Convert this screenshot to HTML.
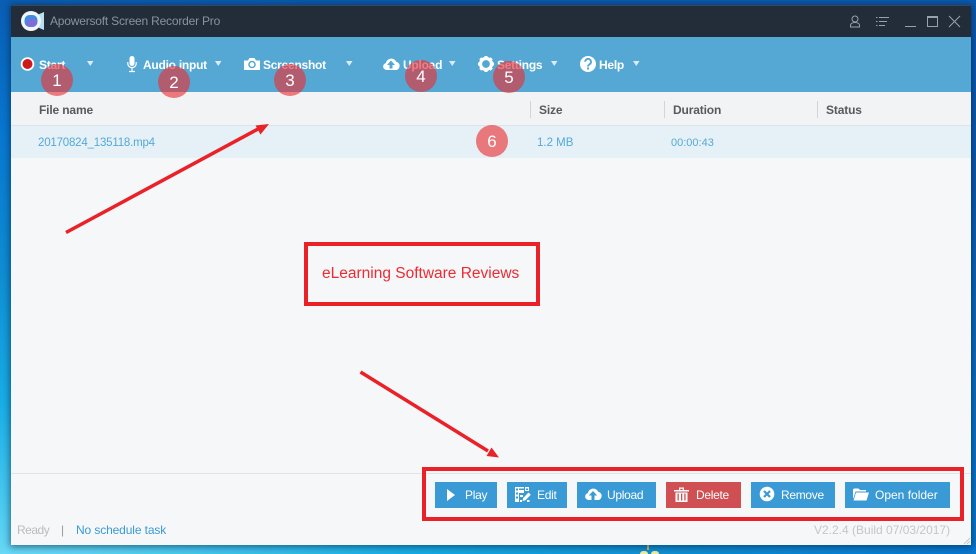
<!DOCTYPE html>
<html><head><meta charset="utf-8">
<style>
*{margin:0;padding:0;box-sizing:border-box}
html,body{width:976px;height:554px;overflow:hidden}
body{position:relative;font-family:"Liberation Sans",sans-serif;font-size:12px;background:radial-gradient(ellipse 1300px 620px at 0 600px,#84e6fa 0,#4fcdf2 14%,#18aee6 32%,#0e8ed4 53%,#0878d0 75%,#0a5ab0 100%)}
.a{position:absolute;white-space:nowrap}
#win{position:absolute;left:11px;top:5px;width:960px;height:540px;background:#f6f7f9;box-shadow:0 1px 7px 1px rgba(0,20,50,.55)}
.t{height:16px;line-height:16px}
.tb{color:#fff;font-weight:bold;font-size:12px;letter-spacing:-.25px}
.hd{color:#5a5a5e;font-weight:bold;font-size:12px;letter-spacing:-.15px}
.rw{color:#55a9d8;font-size:11px}
.btn{position:absolute;top:482px;height:26px;background:#3a9ad6}
.bt{position:absolute;top:487px;color:#fff;font-size:12px;line-height:16px;white-space:nowrap;letter-spacing:-.3px}
.sep{position:absolute;top:101px;width:1px;height:17px;background:#d2d4d6}
.c{position:absolute;width:32px;height:32px;border-radius:50%;background:rgba(235,45,50,.62);color:#fff;font-size:17px;line-height:34px;text-align:center}
.box{position:absolute;border:4px solid #ea2228}
svg{position:absolute;left:0;top:0}
</style></head><body>
<div class="a" style="left:640px;top:551px;width:8px;height:3px;border-radius:3px 3px 0 0;background:#f4efa0"></div>
<div class="a" style="left:651px;top:551px;width:8px;height:3px;border-radius:3px 3px 0 0;background:#f4efa0"></div>
<div class="a" style="left:647px;top:545px;width:2px;height:5px;background:#d8c070"></div>
<div id="win"></div>
<div class="a" style="left:11px;top:5px;width:960px;height:32px;background:#232d3a;border-top:1px solid #3c4550"></div>
<div class="a" style="left:11px;top:37px;width:960px;height:55px;background:#55a8d4"></div>
<div class="a" style="left:11px;top:92px;width:960px;height:33px;background:#f1f3f5"></div>
<div class="a" style="left:11px;top:125px;width:960px;height:1px;background:#d8e5ea"></div>
<div class="a" style="left:11px;top:126px;width:960px;height:32px;background:#e5f1f6"></div>
<div class="a" style="left:11px;top:473px;width:960px;height:1px;background:#e0e6e8"></div>

<div class="a t" style="left:50px;top:13px;color:#8b9199;font-size:12px;letter-spacing:-.2px">Apowersoft Screen Recorder Pro</div>
<div class="a t tb" style="left:39px;top:57px">Start</div>
<div class="a t tb" style="left:143px;top:57px">Audio input</div>
<div class="a t tb" style="left:263px;top:57px">Screenshot</div>
<div class="a t tb" style="left:403px;top:57px">Upload</div>
<div class="a t tb" style="left:497px;top:57px">Settings</div>
<div class="a t tb" style="left:599px;top:57px">Help</div>

<div class="a t hd" style="left:39px;top:102px">File name</div>
<div class="a t hd" style="left:539px;top:102px">Size</div>
<div class="a t hd" style="left:673px;top:102px">Duration</div>
<div class="a t hd" style="left:826px;top:102px">Status</div>
<div class="sep" style="left:530px"></div>
<div class="sep" style="left:664px"></div>
<div class="sep" style="left:817px"></div>
<div class="a t rw" style="left:38px;top:135px;font-size:11.500px;letter-spacing:-.2px">20170824_135118.mp4</div>
<div class="a t rw" style="left:537px;top:135px;font-size:11.500px">1.2 MB</div>
<div class="a t rw" style="left:671px;top:135px">00:00:43</div>

<div class="btn" style="left:435px;width:62px"></div>
<div class="btn" style="left:507px;width:60px"></div>
<div class="btn" style="left:577px;width:79px"></div>
<div class="btn" style="left:666px;width:75px;background:#d04f52"></div>
<div class="btn" style="left:751px;width:84px"></div>
<div class="btn" style="left:845px;width:105px"></div>
<div class="bt" style="left:465px">Play</div>
<div class="bt" style="left:537px">Edit</div>
<div class="bt" style="left:607px">Upload</div>
<div class="bt" style="left:696px">Delete</div>
<div class="bt" style="left:781px">Remove</div>
<div class="bt" style="left:875px;letter-spacing:0">Open folder</div>

<div class="a t" style="left:17px;top:522px;color:#bcbcbc;letter-spacing:-.5px">Ready</div>
<div class="a t" style="left:61px;top:522px;color:#9a9a9a">|</div>
<div class="a t" style="left:76px;top:522px;color:#3a9ad6;letter-spacing:-.12px">No schedule task</div>
<div class="a t" style="left:814px;top:522px;color:#c4c6c8">V2.2.4 (Build 07/03/2017)</div>

<svg width="976" height="554" viewBox="0 0 976 554">
  <!-- logo -->
  <path d="M37 15l7-3v18l-7-3z" fill="#b8dff2"/>
  <ellipse cx="31" cy="21" rx="10" ry="10" fill="#f0f6fa"/>
  <rect x="24.500" y="15" width="13" height="12" rx="5" fill="#3a8fe0"/>
  <path d="M26 25a6 6 0 0 1 11-4v2a5 5 0 0 1-5 4h-3z" fill="#7a6fd8"/>
  <!-- title bar icons -->
  <g fill="none" stroke="#9ba1a8" stroke-width="1">
    <circle cx="855" cy="19" r="3"/>
    <path d="M850.500 27v-1.500c0-2 2-3 4.500-3s4.500 1 4.500 3V27z"/>
    <path d="M879 17.500h10M879 21.500h8M879 25.500h6"/>
    <path d="M876 17.500h1.500M876 21.500h1.500M876 25.500h1.500"/>
    <path d="M905 26.500h11"/>
    <rect x="927.500" y="16.500" width="10" height="10"/>
    <path d="M927 17.500h11"/>
    <path d="M949 16l11 11M960 16l-11 11"/>
  </g>
  <!-- start -->
  <circle cx="27.500" cy="64" r="6.800" fill="#fff"/>
  <circle cx="27.500" cy="64" r="5" fill="#cf1a1c"/>
  <!-- carets -->
  <g fill="#d9edf7">
    <path d="M87 61h6.500l-3.250 5z"/>
    <path d="M215 61h6.500l-3.250 5z"/>
    <path d="M346 61h6.500l-3.250 5z"/>
    <path d="M449 61h6.500l-3.250 5z"/>
    <path d="M551 61h6.500l-3.250 5z"/>
    <path d="M633 61h6.500l-3.250 5z"/>
  </g>
  <!-- mic -->
  <rect x="129.500" y="56" width="5" height="10" rx="2.500" fill="#fff"/>
  <path d="M127.800 62v1.500a4.200 4.200 0 0 0 8.400 0V62M132 68v3M129 71.500h6" fill="none" stroke="#fff" stroke-width="1.200"/>
  <!-- camera -->
  <path d="M244 60.500h4l1.500-2.500h5l1.500 2.500h4V70h-16z" fill="#fff"/>
  <circle cx="252" cy="64.500" r="3.800" fill="#55a8d4"/>
  <circle cx="252" cy="64.500" r="2.300" fill="#fff"/>
  <!-- cloud -->
  <path d="M386.500 70a3.500 3.500 0 0 1-.7-6.900 5.500 5.500 0 0 1 10.400-1.300 4.200 4.200 0 0 1 .3 8.200z" fill="#fff"/>
  <path d="M391 60.500l4 4.500h-2.500v3.500h-3V65H387z" fill="#55a8d4"/>
  <!-- gear -->
  <circle cx="486" cy="64" r="5.500" fill="none" stroke="#fff" stroke-width="3.200"/>
  <g stroke="#fff" stroke-width="3">
    <path d="M486 56v3M486 69v3M478 64h3M491 64h3M480.300 58.300l2.200 2.200M489.500 67.500l2.200 2.200M491.700 58.300l-2.200 2.200M482.500 67.500l-2.200 2.200"/>
  </g>
  <!-- help -->
  <circle cx="588" cy="64" r="8" fill="#fff"/>
  <path d="M585.200 61.800a2.900 2.900 0 1 1 4.500 2.400c-1.100.8-1.700 1.200-1.700 2.300" fill="none" stroke="#55a8d4" stroke-width="1.900"/>
  <rect x="587" y="67.500" width="2" height="2" fill="#55a8d4"/>
  <!-- play -->
  <path d="M447 489l8 6-8 6z" fill="#fff"/>
  <!-- edit: film strip with pencil -->
  <g fill="#fff">
    <path d="M515 487h4v15h-4z"/>
    <path d="M516 488.500h2v2h-2zM516 492.500h2v2h-2zM516 496.500h2v2h-2z" fill="#3a9ad6"/>
    <path d="M519 487h5v1.500h-5zM519 490h5v3h-5zM525 487h4v4h-4z"/>
    <path d="M526 488.500h2v1.500h-2z" fill="#3a9ad6"/>
    <path d="M520 495h3v2h-3zM520 500h2v2h-2z"/>
    <path d="M522.500 501l.7-3 5.300-5.500 2.300 2.300-5.300 5.500z"/>
    <path d="M527 500h2.500v2H527z"/>
  </g>
  <!-- upload cloud -->
  <path d="M588.500 500a3.500 3.500 0 0 1-.7-6.900 5.500 5.500 0 0 1 10.400-1.300 4.200 4.200 0 0 1 .3 8.200z" fill="#fff"/>
  <path d="M593 491l4.200 4.500h-2.700v4.500h-3v-4.500h-2.700z" fill="#3a9ad6"/>
  <!-- trash -->
  <g fill="#fff">
    <path d="M674 490h15v1.500h-15z"/>
    <path d="M679 490v-2.500h5V490h-1.300v-1.200h-2.400V490z"/>
    <path d="M675.500 492.500h12V502h-12zM677.500 493.500v7h1.300v-7zM681 493.500v7h1.300v-7zM684.300 493.500v7h1.300v-7z" fill-rule="evenodd"/>
  </g>
  <!-- remove -->
  <circle cx="767" cy="494" r="7.300" fill="#fff"/>
  <path d="M764 491l6 6M770 491l-6 6" stroke="#3a9ad6" stroke-width="2.200"/>
  <!-- folder -->
  <path d="M853 498v-8.500l1-1h4.500l1.500 1.500h6v1.500h-10.500l-2 6.500z" fill="#fff"/>
  <path d="M853.500 500.500l2.500-8h13l-2.500 8z" fill="#fff"/>
  <!-- resize grip -->
  <path d="M964 544l6-6M967 544l3-3" stroke="#c6c8ca" stroke-width="1" fill="none"/>
  <!-- arrows -->
  <g stroke="#ea2228" fill="#ea2228">
    <path d="M66 232.500L258 129" stroke-width="3.500" fill="none"/>
    <path d="M269 124l-8.500 10.500-5-9z" stroke="none"/>
    <path d="M360.500 372L488 451" stroke-width="3.500" fill="none"/>
    <path d="M499 457.500l-12.500-1.500 5-8.500z" stroke="none"/>
  </g>
</svg>

<div class="c" style="left:41px;top:64px">1</div>
<div class="c" style="left:158px;top:66px">2</div>
<div class="c" style="left:274px;top:64px">3</div>
<div class="c" style="left:405px;top:60px">4</div>
<div class="c" style="left:493px;top:61px">5</div>
<div class="c" style="left:476px;top:125px">6</div>

<div class="box" style="left:304px;top:242px;width:236px;height:64px"></div>
<div class="a" style="left:322px;top:265px;color:#ee2a32;font-size:15.500px;line-height:18px">eLearning Software Reviews</div>
<div class="box" style="left:422px;top:467px;width:542px;height:54px"></div>
</body></html>
